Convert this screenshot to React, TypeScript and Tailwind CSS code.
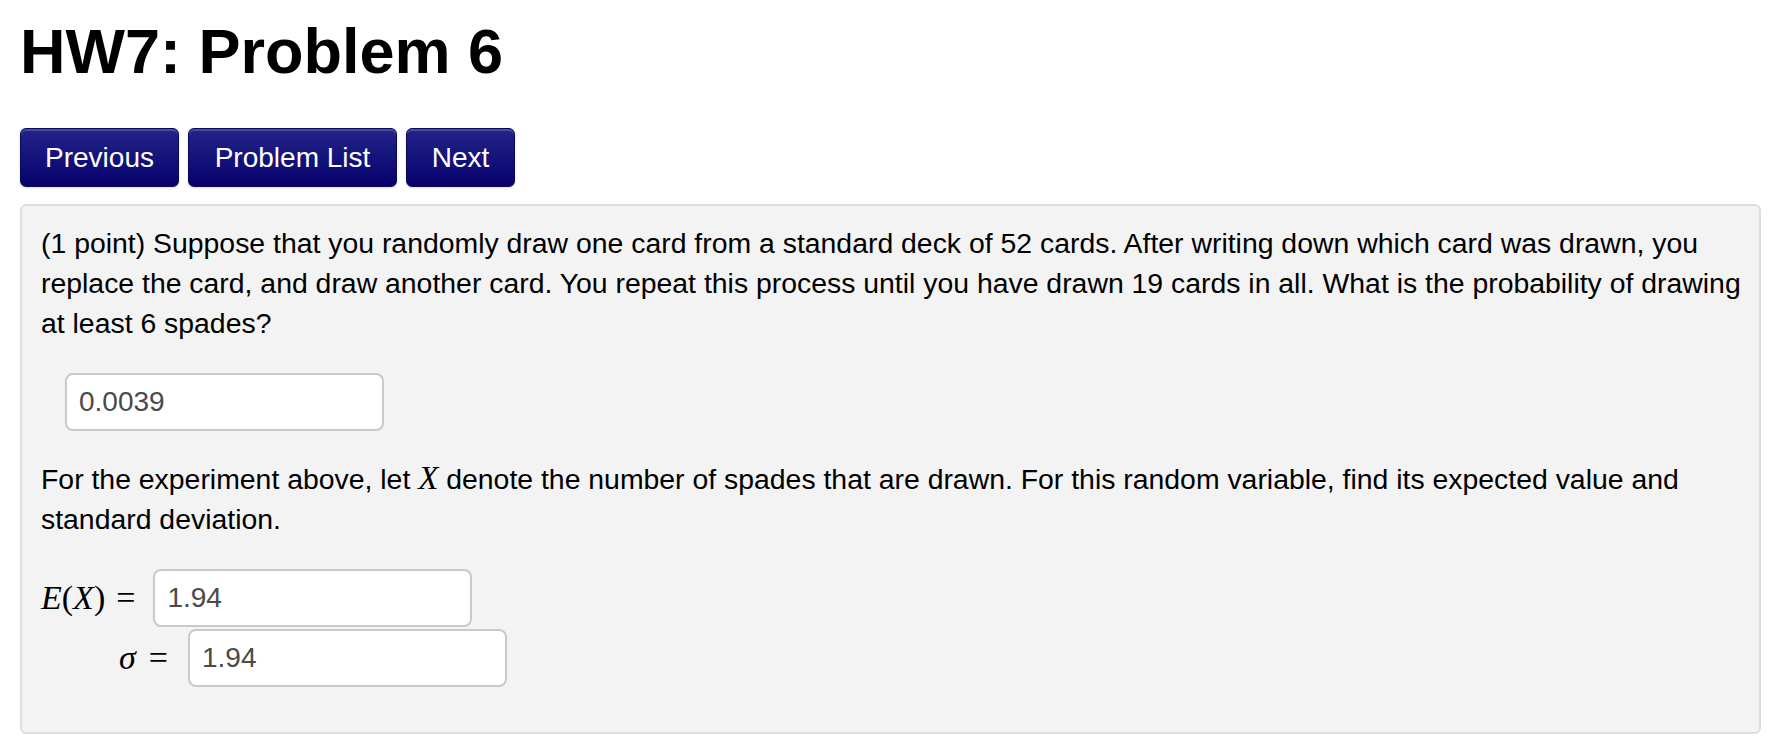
import React from "react";

const navButtons = [
  { label: "Previous", width: "w-[159px]" },
  { label: "Problem List", width: "w-[209px]" },
  { label: "Next", width: "w-[109px]" },
];

function AnswerBox({ value, className = "" }: { value: string; className?: string }) {
  return (
    <input
      readOnly
      value={value}
      className={`h-[58px] w-[319px] rounded-[8px] border-2 border-[#c9c9c9] bg-white px-[12px] text-[28px] text-[#4a4a4a] outline-none font-['Liberation_Sans',Arial,sans-serif] ${className}`}
    />
  );
}

export default function App() {
  return (
    <div className="min-h-screen bg-white pl-[20px] pr-[17px] text-black font-['Liberation_Sans',Arial,sans-serif]">
      {/* Title */}
      <h1 className="pt-[20px] text-[63px] font-bold leading-[62px]">HW7: Problem 6</h1>

      {/* Navigation */}
      <div className="mt-[46px] flex gap-[9px]">
        {navButtons.map((b) => (
          <button
            key={b.label}
            className={`${b.width} flex h-[59px] items-center justify-center rounded-[6px] border border-[#0a0a5c] bg-gradient-to-b from-[#22228a] to-[#08006c] text-[28px] text-white shadow-[inset_0_2px_0_rgba(255,255,255,0.18),0_1px_2px_rgba(0,0,0,0.15)]`}
          >
            {b.label}
          </button>
        ))}
      </div>

      {/* Problem body */}
      <div className="mt-[17px] rounded-[6px] border-2 border-[#dedede] bg-[#f3f3f3] pb-[45px] pl-[19px] pr-[10px] pt-[17px] text-[28.4px] leading-[40px]">
        <p>
          (1 point) Suppose that you randomly draw one card from a standard deck of 52 cards. After
          writing down which card was drawn, you replace the card, and draw another card. You repeat
          this process until you have drawn 19 cards in all. What is the probability of drawing at
          least 6 spades?
        </p>

        <div className="mt-[30px] ml-[24px]">
          <AnswerBox value="0.0039" />
        </div>

        <p className="mt-[28px]">
          For the experiment above, let{" "}
          <span className="text-[33px] italic leading-none font-['Liberation_Serif',serif]">X</span>{" "}
          denote the number of spades that are drawn. For this random variable, find its expected
          value and standard deviation.
        </p>

        <div className="mt-[30px] flex items-center">
          <span className="text-[34px] leading-none font-['Liberation_Serif',serif]">
            <span className="italic">E</span>(<span className="italic">X</span>)
            <span className="ml-[11px]">=</span>
          </span>
          <AnswerBox value="1.94" className="ml-[18px] w-[318px]" />
        </div>

        <div className="mt-[2px] flex items-center pl-[78px]">
          <span className="text-[34px] leading-none font-['Liberation_Serif',serif]">
            <span className="italic">σ</span>
            <span className="ml-[13px]">=</span>
          </span>
          <AnswerBox value="1.94" className="ml-[20px] w-[318px]" />
        </div>
      </div>
    </div>
  );
}
